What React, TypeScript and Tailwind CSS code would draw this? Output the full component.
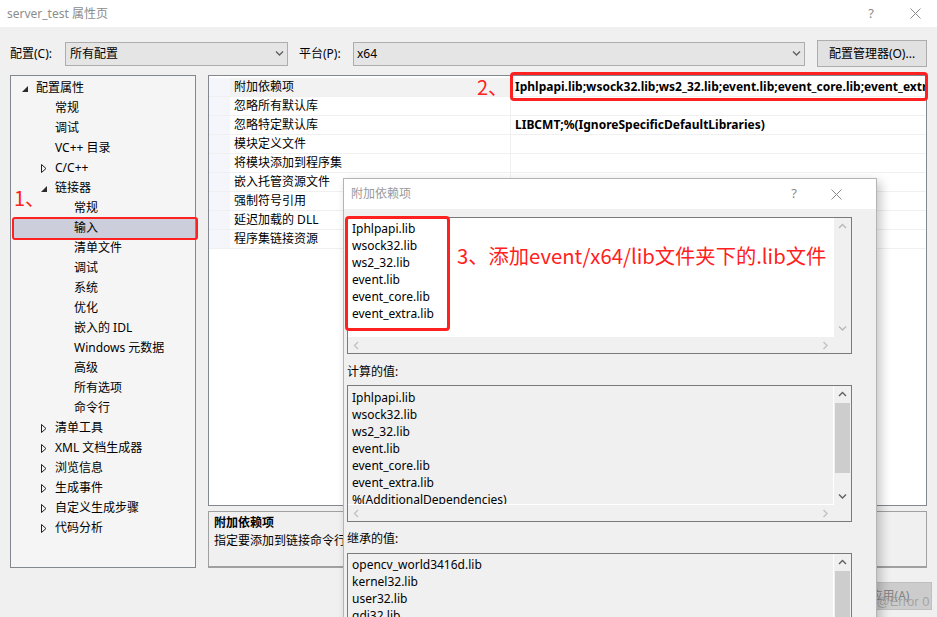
import React from "react";

type TreeItem = {
  label: string;
  level: 0 | 1 | 2;
  arrow?: "open" | "closed";
  selected?: boolean;
};

const tree: TreeItem[] = [
  { label: "配置属性", level: 0, arrow: "open" },
  { label: "常规", level: 1 },
  { label: "调试", level: 1 },
  { label: "VC++ 目录", level: 1 },
  { label: "C/C++", level: 1, arrow: "closed" },
  { label: "链接器", level: 1, arrow: "open" },
  { label: "常规", level: 2 },
  { label: "输入", level: 2, selected: true },
  { label: "清单文件", level: 2 },
  { label: "调试", level: 2 },
  { label: "系统", level: 2 },
  { label: "优化", level: 2 },
  { label: "嵌入的 IDL", level: 2 },
  { label: "Windows 元数据", level: 2 },
  { label: "高级", level: 2 },
  { label: "所有选项", level: 2 },
  { label: "命令行", level: 2 },
  { label: "清单工具", level: 1, arrow: "closed" },
  { label: "XML 文档生成器", level: 1, arrow: "closed" },
  { label: "浏览信息", level: 1, arrow: "closed" },
  { label: "生成事件", level: 1, arrow: "closed" },
  { label: "自定义生成步骤", level: 1, arrow: "closed" },
  { label: "代码分析", level: 1, arrow: "closed" },
];

const indent = ["pl-[9px]", "pl-[28px]", "pl-[47px]"];

const props: [string, string][] = [
  [
    "附加依赖项",
    "Iphlpapi.lib;wsock32.lib;ws2_32.lib;event.lib;event_core.lib;event_extra.lib;%(AdditionalDependencies)",
  ],
  ["忽略所有默认库", ""],
  ["忽略特定默认库", "LIBCMT;%(IgnoreSpecificDefaultLibraries)"],
  ["模块定义文件", ""],
  ["将模块添加到程序集", ""],
  ["嵌入托管资源文件", ""],
  ["强制符号引用", ""],
  ["延迟加载的 DLL", ""],
  ["程序集链接资源", ""],
];

const libs = [
  "Iphlpapi.lib",
  "wsock32.lib",
  "ws2_32.lib",
  "event.lib",
  "event_core.lib",
  "event_extra.lib",
];

const inherited = [
  "opencv_world3416d.lib",
  "kernel32.lib",
  "user32.lib",
  "gdi32.lib",
  "winspool.lib",
];

function Arrow({ kind }: { kind?: "open" | "closed" }) {
  if (kind === "open")
    return (
      <svg width="7" height="7" viewBox="0 0 7 7" className="mt-[3px]">
        <polygon points="6,0 6,6 0,6" fill="#2b2b2b" />
      </svg>
    );
  if (kind === "closed")
    return (
      <svg width="6" height="9" viewBox="0 0 6 9" className="mt-[1px]">
        <polygon points="0.5,0.5 5,4.5 0.5,8.5" fill="none" stroke="#1e1e1e" />
      </svg>
    );
  return null;
}

function Chevron({ dir, color }: { dir: "up" | "down" | "left" | "right"; color: string }) {
  const pts = {
    up: "1,5 4.5,1.5 8,5",
    down: "1,1.5 4.5,5 8,1.5",
    left: "5,1 1.5,4.5 5,8",
    right: "1.5,1 5,4.5 1.5,8",
  }[dir];
  const vertical = dir === "up" || dir === "down";
  return (
    <svg
      width={vertical ? 9 : 7}
      height={vertical ? 7 : 9}
      viewBox={vertical ? "0 0 9 7" : "0 0 7 9"}
    >
      <polyline points={pts} fill="none" stroke={color} strokeWidth="1.4" />
    </svg>
  );
}

function CloseX({ color }: { color: string }) {
  return (
    <svg width="11" height="11" viewBox="0 0 11 11">
      <path d="M0.5 0.5 L10.5 10.5 M10.5 0.5 L0.5 10.5" stroke={color} strokeWidth="1" />
    </svg>
  );
}

function TextBox({
  lines,
  height,
  white,
  thumb,
  pad,
  open,
}: {
  lines: string[];
  height: string;
  white?: boolean;
  thumb?: string;
  pad: string;
  open?: boolean;
}) {
  return (
    <div className={`w-[505px] ${height} shrink-0 border border-[#7a7a7a] flex flex-col bg-[#f0f0f0]`}>
      <div className="flex-1 flex min-h-0">
        <div
          className={`flex-1 min-w-0 overflow-hidden pl-[4px] ${pad} ${
            white ? "bg-white" : "bg-[#f0f0f0] border-r border-b border-white"
          }`}
        >
          {lines.map((l, i) => (
            <div key={i} className="h-[17px] leading-[17px] whitespace-nowrap">
              {l}
            </div>
          ))}
        </div>
        <div className="w-[17px] flex flex-col items-center bg-[#f0f0f0]">
          <div className="h-[17px] shrink-0 flex items-center justify-center">
            <Chevron dir="up" color={thumb ? "#606060" : "#b8b8b8"} />
          </div>
          {thumb && <div className={`w-[15px] ${thumb} shrink-0 bg-[#cdcdcd]`} />}
          <div className="flex-1" />
          {!open && (
            <div className="h-[17px] shrink-0 flex items-center justify-center">
              <Chevron dir="down" color={thumb ? "#606060" : "#b8b8b8"} />
            </div>
          )}
        </div>
      </div>
      {!open && (
        <div className="h-[16px] shrink-0 flex items-center justify-between pl-[5px] pr-[22px]">
          <Chevron dir="left" color="#c2c2c2" />
          <Chevron dir="right" color="#c2c2c2" />
        </div>
      )}
    </div>
  );
}

export default function App() {
  return (
    <div className="relative w-[937px] h-[617px] overflow-hidden bg-[#f0f0f0] text-[12px] text-black font-['Noto_Sans','Noto_Sans_CJK_SC',sans-serif]">
      {/* title bar */}
      <div className="h-[27px] bg-white flex items-center pl-[7px] pr-[16px]">
        <span className="text-[#8c8c8c] text-[12px]">server_test 属性页</span>
        <span className="ml-auto text-[#8a8a8a] text-[13px] mr-[36px]">?</span>
        <CloseX color="#8a8a8a" />
      </div>

      {/* toolbar */}
      <div className="mt-[13px] h-[27px] flex items-center pl-[10px]">
        <span className="w-[55px]">配置(C):</span>
        <div className="w-[223px] h-[24px] bg-[#e5e5e5] border border-[#adadad] flex items-center pl-[4px] pr-[3px]">
          <span>所有配置</span>
          <span className="ml-auto">
            <Chevron dir="down" color="#606060" />
          </span>
        </div>
        <span className="ml-[11px] w-[54px]">平台(P):</span>
        <div className="w-[452px] h-[24px] bg-[#e5e5e5] border border-[#adadad] flex items-center pl-[3px] pr-[3px]">
          <span>x64</span>
          <span className="ml-auto">
            <Chevron dir="down" color="#606060" />
          </span>
        </div>
        <div className="ml-[12px] w-[110px] h-[27px] bg-[#e1e1e1] border border-[#adadad] flex items-center justify-center">
          配置管理器(O)...
        </div>
      </div>

      {/* content */}
      <div className="mt-[8px] flex pl-[10px]">
        <div className="w-[186px] h-[493px] border border-[#828790] bg-[#f5f5f5] pt-[2px]">
          {tree.map((t, i) => (
            <div
              key={i}
              className={`h-[20px] ml-[2px] flex items-center ${indent[t.level]} ${
                t.selected ? "bg-[#cccedb]" : ""
              }`}
            >
              <div className="w-[14px] flex items-center">
                <Arrow kind={t.arrow} />
              </div>
              <span className="whitespace-nowrap">{t.label}</span>
            </div>
          ))}
        </div>

        <div className="ml-[12px] w-[719px] flex flex-col">
          <div className="h-[431px] border border-[#828790] bg-white pt-[2px]">
            {props.map(([name, value], i) => (
              <div key={i} className="h-[19px] flex border-b border-[#f0f0f0]">
                <div className="w-[21px] bg-[#f4f6fb]" />
                <div
                  className={`w-[280px] flex items-center pl-[4px] ${
                    i === 0 ? "bg-[#f2f2f2]" : ""
                  }`}
                >
                  {name}
                </div>
                <div className="flex-1 min-w-0 border-l border-[#f0f0f0] flex items-center pl-[4px] overflow-hidden whitespace-nowrap font-bold">
                  {value}
                </div>
              </div>
            ))}
          </div>
          <div className="mt-[5px] h-[57px] border border-[#a0a0a0] border-b-2 bg-[#f0f0f0] pl-[5px] pt-[2px]">
            <div className="font-bold leading-[18px]">附加依赖项</div>
            <div className="leading-[18px] whitespace-nowrap">
              指定要添加到链接命令行的其他项。例如 kernel32.lib
            </div>
          </div>
        </div>
      </div>

      {/* bottom buttons */}
      <div className="mt-[14px] flex justify-end pr-[5px]">
        <div className="w-[84px] h-[28px] bg-[#cccccc] border border-[#bfbfbf] flex items-center justify-center text-[#838383]">
          应用(A)
        </div>
      </div>

      {/* annotations on main window */}
      <div className="absolute left-[12px] top-[217px] w-[186px] h-[23px] border-2 border-[#ff2020] rounded-[3px]" />
      <div className="absolute left-[14px] top-[185px] text-[20px] leading-[26px] text-[#ff2020] font-['Noto_Sans_CJK_SC',sans-serif]">
        1、
      </div>
      <div className="absolute left-[510px] top-[72px] w-[418px] h-[29px] border-[3px] border-[#ff2020] rounded-[4px]" />
      <div className="absolute left-[477px] top-[74px] text-[20px] leading-[26px] text-[#ff2020] font-['Noto_Sans_CJK_SC',sans-serif]">
        2、
      </div>

      {/* watermark */}
      <div className="absolute left-[836px] top-[592px] text-[13px] text-[#9a9a9a]/80 font-['Liberation_Sans',sans-serif]">
        CSDN @Error 0
      </div>

      {/* dialog */}
      <div className="absolute left-[343px] top-[178px] w-[534px] h-[460px] bg-[#f0f0f0] border border-[#b4b4b4] shadow-[4px_4px_10px_rgba(0,0,0,0.22)]">
        <div className="h-[30px] bg-white flex items-center pl-[7px] pr-[34px]">
          <span className="text-[#9a9a9a]">附加依赖项</span>
          <span className="ml-auto mr-[34px] text-[#8a8a8a] text-[13px]">?</span>
          <CloseX color="#8a8a8a" />
        </div>
        <div className="pl-[3px] pt-[8px] flex flex-col">
          <TextBox lines={libs} height="h-[137px]" white pad="pt-[2px]" />
          <div className="h-[31px] shrink-0 flex items-center pt-[4px]">计算的值:</div>
          <TextBox
            lines={[...libs, "%(AdditionalDependencies)"]}
            height="h-[137px]"
            thumb="h-[70px]"
            pad="pt-[3px]"
          />
          <div className="h-[31px] shrink-0 flex items-center pt-[3px]">继承的值:</div>
          <TextBox lines={inherited} height="h-[100px]" thumb="h-[200px]" pad="pt-[2px]" open />
        </div>
      </div>

      {/* dialog annotations */}
      <div className="absolute left-[345px] top-[216px] w-[105px] h-[115px] border-[3px] border-[#ff2020] rounded-[4px]" />
      <div className="absolute left-[457px] top-[240px] text-[20.3px] leading-[30px] text-[#ff2020] whitespace-nowrap font-['Noto_Sans_CJK_SC',sans-serif]">
        3、添加event/x64/lib文件夹下的.lib文件
      </div>
    </div>
  );
}
